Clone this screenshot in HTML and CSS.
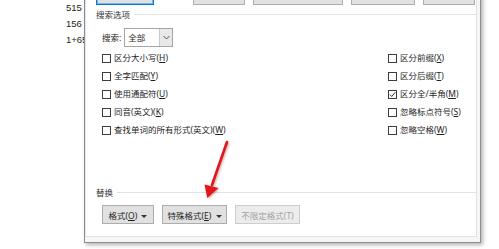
FILE: index.html
```html
<!DOCTYPE html>
<html lang="zh-CN">
<head>
  <meta charset="UTF-8" />
  <meta name="viewport" content="width=device-width, initial-scale=1.0" />
  <title>查找和替换</title>
  <link rel="stylesheet" href="styles.css">
</head>
<body>
  <div class="doc">
    <div>515</div>
    <div>156</div>
    <div>1+65</div>
  </div>

  <div class="dialog">
    <div class="client">
      <div class="topbtns">
        <span class="btn focus"></span>
        <span class="btn w52 far"></span>
        <span class="btn w90"></span>
        <span class="btn w64"></span>
        <span class="btn w52"></span>
      </div>

      <div class="group-title">搜索选项</div>
      <div class="search-row">
        <label>搜索:</label>
        <div class="select">
          <span class="value">全部</span>
          <span class="drop">
            <svg width="7" height="5" viewBox="0 0 7 5"><path d="M0.5 1 L3.5 4 L6.5 1" fill="none" stroke="#555" stroke-width="1"/></svg>
          </span>
        </div>
      </div>

      <div class="options">
        <div class="col">
          <div class="opt"><span class="box"></span><span>区分大小写(<u>H</u>)</span></div>
          <div class="opt"><span class="box"></span><span>全字匹配(<u>Y</u>)</span></div>
          <div class="opt"><span class="box"></span><span>使用通配符(<u>U</u>)</span></div>
          <div class="opt"><span class="box"></span><span>同音(英文)(<u>K</u>)</span></div>
          <div class="opt"><span class="box"></span><span>查找单词的所有形式(英文)(<u>W</u>)</span></div>
        </div>
        <div class="col">
          <div class="opt"><span class="box"></span><span>区分前缀(<u>X</u>)</span></div>
          <div class="opt"><span class="box"></span><span>区分后缀(<u>T</u>)</span></div>
          <div class="opt"><span class="box"><svg width="7" height="7" viewBox="0 0 7 7"><path d="M0.8 3.6 L2.7 5.5 L6.3 1.2" fill="none" stroke="#333" stroke-width="1"/></svg></span><span>区分全/半角(<u>M</u>)</span></div>
          <div class="opt"><span class="box"></span><span>忽略标点符号(<u>S</u>)</span></div>
          <div class="opt"><span class="box"></span><span>忽略空格(<u>W</u>)</span></div>
        </div>
      </div>

      <div class="group-title replace">替换</div>
      <div class="btn-row">
        <button class="btn w52">格式(<u>O</u>) <i class="caret"></i></button>
        <button class="btn w65">特殊格式(<u>E</u>) <i class="caret"></i></button>
        <button class="btn w65" disabled>不限定格式(T)</button>
      </div>
    </div>
  </div>

  <svg class="arrow" width="499" height="249" viewBox="0 0 499 249">
    <line x1="227" y1="142" x2="212" y2="185" stroke="#e3161c" stroke-width="2.6" stroke-linecap="round"/>
    <polygon points="204.5,184.5 218.5,188 207.3,198" fill="#e3161c"/>
  </svg>
</body>
</html>
```

FILE: styles.css
```css
body {
  margin: 0;
  background: #fff;
  display: flex;
  align-items: flex-start;
  height: 249px;
  overflow: hidden;
  font-family: "Noto Sans", "Noto Sans CJK SC", sans-serif;
  color: #1e1e1e;
}

.doc {
  width: 18px;
  padding-left: 66px;
  overflow: hidden;
  white-space: nowrap;
  font-family: "Liberation Sans", sans-serif;
  font-size: 9.5px;
  line-height: 16px;
  color: #222;
}

.dialog {
  width: 397px;
  box-sizing: border-box;
  margin-top: -30px;
  border: 1px solid #8e8e8e;
  background: #f6f6f6;
  padding: 0 3px 5px 0;
  box-shadow: 2px 2px 4px rgba(0, 0, 0, 0.3);
  font-size: 8.5px;
  line-height: 12px;
}

.client {
  background: #fff;
  border-left: 1px solid #e4e4e4;
  border-right: 1px solid #e2e2e2;
  border-bottom: 1px solid #e2e2e2;
  padding: 14px 0 12px 10px;
}

.topbtns {
  display: flex;
  gap: 8px;
  height: 20px;
}

.btn {
  box-sizing: border-box;
  height: 19px;
  border: 1px solid #adadad;
  background: #e1e1e1;
  font-family: inherit;
  font-size: inherit;
  color: #1e1e1e;
  padding: 0;
}

.topbtns .btn {
  height: 20px;
}

.btn.focus {
  width: 58px;
  border: 1px solid #0078d7;
  box-shadow: inset 0 0 0 1px #7eb4ea;
}

.far {
  margin-left: 31px;
}

.w52 { width: 52px; }
.w64 { width: 64px; }
.w65 { width: 65px; }
.w90 { width: 90px; }

.group-title {
  display: flex;
  align-items: center;
  gap: 4px;
  margin-top: 4px;
  height: 12px;
  color: #333;
}

.group-title::after {
  content: "";
  flex: 1;
  height: 1px;
  background: #e3e3e3;
  margin-bottom: 2px;
}

.search-row {
  display: flex;
  align-items: center;
  margin: 7px 0 2px 6px;
  gap: 3px;
}

.select {
  display: flex;
  width: 49px;
  height: 19px;
  box-sizing: border-box;
  border: 1px solid #a5a5a5;
}

.select .value {
  flex: 1;
  padding-left: 3px;
  line-height: 17px;
}

.select .drop {
  width: 12px;
  border-left: 1px solid #c8c8c8;
  background: #e9e9e9;
  display: flex;
  align-items: center;
  justify-content: center;
}

.options {
  display: grid;
  grid-template-columns: 286px auto;
  margin-left: 6px;
}

.opt {
  display: flex;
  align-items: center;
  gap: 3px;
  height: 18px;
  white-space: nowrap;
}

.box {
  width: 9px;
  height: 9px;
  box-sizing: border-box;
  border: 1px solid #3c3c3c;
  background: #fff;
  display: flex;
  align-items: center;
  justify-content: center;
}

.replace {
  margin-top: 48px;
}

.btn-row {
  display: flex;
  gap: 8px;
  margin: 6px 0 0 6px;
}

.btn[disabled] {
  background: #ececec;
  border-color: #cdcdcd;
  color: #a2a2a2;
}

.caret {
  display: inline-block;
  vertical-align: middle;
  margin-left: 2px;
  border-left: 3px solid transparent;
  border-right: 3px solid transparent;
  border-top: 3px solid #333;
}

.arrow {
  position: absolute;
  left: 0;
  top: 0;
  pointer-events: none;
  filter: drop-shadow(1px 1px 1px rgba(120, 0, 0, 0.35));
}
```
